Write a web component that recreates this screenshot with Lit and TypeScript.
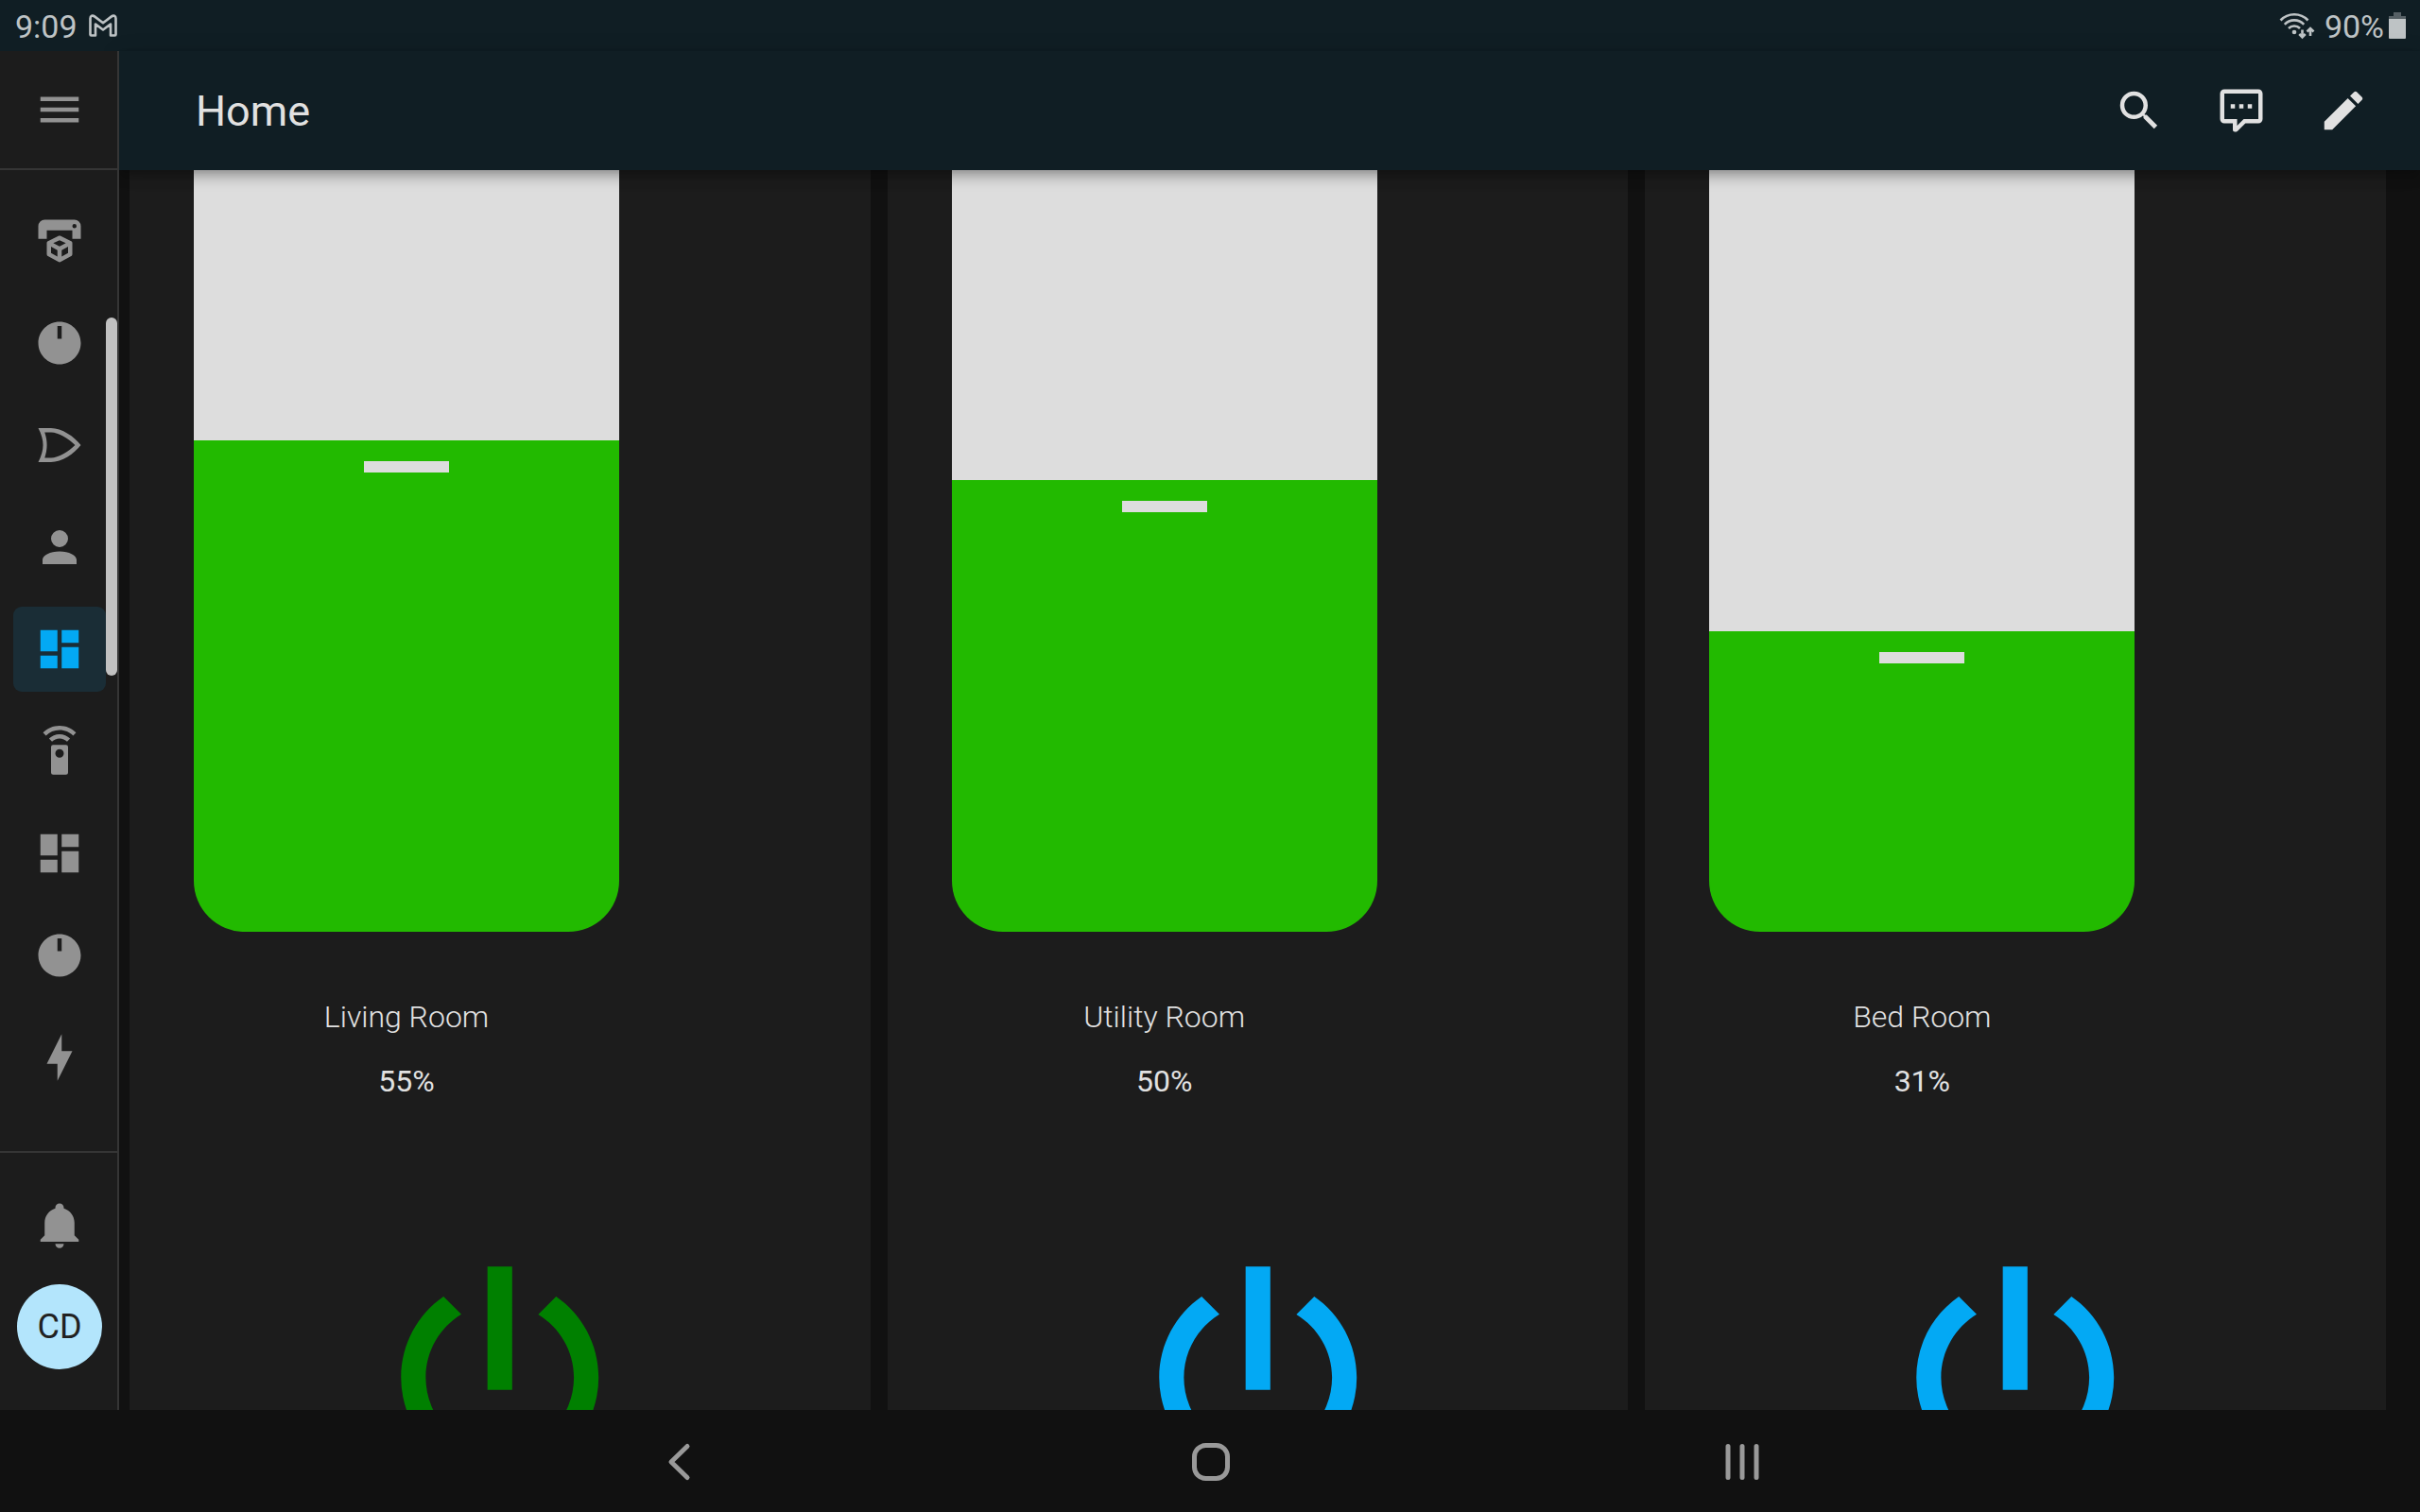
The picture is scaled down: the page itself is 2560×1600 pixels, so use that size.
import { LitElement, html, css, svg, nothing } from "lit";
import { customElement, property, state } from "lit/decorators.js";
import { classMap } from "lit/directives/class-map.js";
import { styleMap } from "lit/directives/style-map.js";

const icons: Record<string, string> = {
  menu: "M3,6H21V8H3V6M3,11H21V13H3V11M3,16H21V18H3V16Z",
  printer:
    "M19,6A1,1 0 0,0 20,5A1,1 0 0,0 19,4A1,1 0 0,0 18,5A1,1 0 0,0 19,6M19,2A3,3 0 0,1 22,5V11H18V7H6V11H2V5A3,3 0 0,1 5,2H19M18,18.25C18,18.63 17.79,18.96 17.47,19.13L12.57,21.82C12.4,21.94 12.21,22 12,22C11.79,22 11.59,21.94 11.43,21.82L6.53,19.13C6.21,18.96 6,18.63 6,18.25V13C6,12.62 6.21,12.29 6.53,12.12L11.43,9.68C11.59,9.56 11.79,9.5 12,9.5C12.21,9.5 12.4,9.56 12.57,9.68L17.47,12.12C17.79,12.29 18,12.62 18,13V18.25M12,11.65L9.04,13L12,14.6L14.96,13L12,11.65M8,17.66L11,19.29V16.33L8,14.71V17.66M16,17.66V14.71L13,16.33V19.29L16,17.66Z",
  knob: "M12 2C6.47 2 2 6.5 2 12C2 17.5 6.5 22 12 22C17.5 22 22 17.5 22 12C22 6.5 17.5 2 12 2M13 10H11V4H13V10Z",
  gate: "M2,4C5,10 5,14 2,20H8C13,20 19,16 22,12C19,8 13,4 8,4H2M5,6H8C11.5,6 16.3,9 19.3,12C16.3,15 11.5,18 8,18H5C6.4,13.9 6.4,10.1 5,6Z",
  account:
    "M12,4A4,4 0 0,1 16,8A4,4 0 0,1 12,12A4,4 0 0,1 8,8A4,4 0 0,1 12,4M12,14C16.42,14 20,15.79 20,18V20H4V18C4,15.79 7.58,14 12,14Z",
  dashboard: "M13,3V9H21V3M13,21H21V11H13M3,21H11V15H3M3,13H11V3H3V13Z",
  remote:
    "M12,0C8.96,0 6.21,1.23 4.22,3.22L5.63,4.63C7.26,3 9.5,2 12,2C14.5,2 16.74,3 18.36,4.64L19.77,3.23C17.79,1.23 15.04,0 12,0M7.05,6.05L8.46,7.46C9.37,6.56 10.62,6 12,6C13.38,6 14.63,6.56 15.54,7.46L16.95,6.05C15.68,4.78 13.93,4 12,4C10.07,4 8.32,4.78 7.05,6.05M12,15A2,2 0 0,1 10,13A2,2 0 0,1 12,11A2,2 0 0,1 14,13A2,2 0 0,1 12,15M15,9H9A1,1 0 0,0 8,10V22A1,1 0 0,0 9,23H15A1,1 0 0,0 16,22V10A1,1 0 0,0 15,9Z",
  bolt: "M11 15H6L13 1V9H18L11 23V15Z",
  bell: "M21,19V20H3V19L5,17V11C5,7.9 7.03,5.17 10,4.29C10,4.19 10,4.1 10,4A2,2 0 0,1 12,2A2,2 0 0,1 14,4C14,4.1 14,4.19 14,4.29C16.97,5.17 19,7.9 19,11V17L21,19M14,21A2,2 0 0,1 12,23A2,2 0 0,1 10,21",
  search:
    "M9.5,3A6.5,6.5 0 0,1 16,9.5C16,11.11 15.41,12.59 14.44,13.73L14.71,14H15.5L20.5,19L19,20.5L14,15.5V14.71L13.73,14.44C12.59,15.41 11.11,16 9.5,16A6.5,6.5 0 0,1 3,9.5A6.5,6.5 0 0,1 9.5,3M9.5,5C7,5 5,7 5,9.5C5,12 7,14 9.5,14C12,14 14,12 14,9.5C14,7 12,5 9.5,5Z",
  assist:
    "M20 2H4C2.9 2 2 2.9 2 4V16C2 17.1 2.9 18 4 18H8V21C8 21.6 8.4 22 9 22H9.5C9.7 22 10 21.9 10.2 21.7L13.9 18H20C21.1 18 22 17.1 22 16V4C22 2.9 21.1 2 20 2M20 16H13.1L10 19.1V16H4V4H20V16M17 11H15V9H17V11M13 11H11V9H13V11M9 11H7V9H9V11",
  pencil:
    "M20.71,7.04C21.1,6.65 21.1,6 20.71,5.63L18.37,3.29C18,2.9 17.35,2.9 16.96,3.29L15.12,5.12L18.87,8.87M3,17.25V21H6.75L17.81,9.93L14.06,6.18L3,17.25Z",
  power:
    "M16.56,5.44L15.11,6.89C16.84,7.94 18,9.83 18,12A6,6 0 0,1 12,18A6,6 0 0,1 6,12C6,9.83 7.16,7.94 8.88,6.88L7.44,5.44C5.36,6.88 4,9.28 4,12A8,8 0 0,0 12,20A8,8 0 0,0 20,12C20,9.28 18.64,6.88 16.56,5.44M13,3H11V13H13",
};

@customElement("ha-glyph")
class HaGlyph extends LitElement {
  @property() name = "";

  static styles = css`
    :host {
      display: block;
      width: 54px;
    }
    .glyph {
      display: block;
      width: 100%;
      fill: currentColor;
    }
  `;

  render() {
    return html`<svg class="glyph" viewBox="0 0 24 24" aria-hidden="true">
      ${svg`<path d=${icons[this.name] ?? ""}></path>`}
    </svg>`;
  }
}

@customElement("status-bar")
class StatusBar extends LitElement {
  static styles = css`
    :host {
      display: flex;
      align-items: center;
      justify-content: space-between;
      height: 54px;
      padding: 0 14px 0 16px;
      background: #101e24;
      color: #bec3c5;
      font-size: 34px;
      line-height: 52px;
    }
    .side {
      display: flex;
      align-items: center;
    }
    .reading {
      padding-top: 2px;
    }
    .mail {
      width: 30px;
      height: 24px;
      margin-left: 12px;
    }
    .wifi {
      width: 38px;
      height: 30px;
      margin-right: 10px;
    }
    .battery {
      width: 20px;
      height: 30px;
      margin-left: 4px;
    }
    svg {
      display: block;
      fill: none;
      stroke: currentColor;
    }
    .solid {
      fill: currentColor;
      stroke: none;
    }
    .dim {
      fill: #566065;
      stroke: none;
    }
  `;

  render() {
    return html`
      <div class="side">
        <span class="reading">9:09</span>
        <svg class="mail" viewBox="0 0 30 24" stroke-width="2.600" stroke-linejoin="round" aria-label="Mail">
          <path
            d="M1.500 21.500V4.500C1.500 1.500 4 .9 6 2.400L15 9.200L24 2.400C26 .9 28.500 1.500 28.500 4.500V21.500Q28.500 22.500 27.500 22.500H23V10.500L15 16.500L7 10.500V22.500H2.500Q1.500 22.500 1.500 21.500Z"
          ></path>
        </svg>
      </div>
      <div class="side">
        <svg class="wifi" viewBox="0 0 38 30" stroke-width="2.600" aria-label="Wi-Fi">
          <path d="M1.500 9.500A20 20 0 0 1 30.500 9.500M5.800 13.800A14 14 0 0 1 26.200 13.800M10 18A8.500 8.500 0 0 1 22 18"></path>
          <circle class="solid" cx="16" cy="22" r="2.300"></circle>
          <path d="M24.500 19.500V27M21.300 24L24.500 27.400L27.700 24M33 26V18.500M29.500 21.500L33 18L36.500 21.500"></path>
        </svg>
        <span class="reading">90%</span>
        <svg class="battery" viewBox="0 0 20 30" aria-label="Battery">
          <path class="dim" d="M6 1H14V5H19V8H1V5H6Z"></path>
          <path class="solid" d="M1 8H19V28Q19 29 18 29H2Q1 29 1 28Z"></path>
        </svg>
      </div>
    `;
  }
}

interface Panel {
  icon: string;
  label: string;
}

@customElement("side-bar")
class SideBar extends LitElement {
  @state() private selected = 4;

  private panels: Panel[] = [
    { icon: "printer", label: "Printer" },
    { icon: "knob", label: "Controls" },
    { icon: "gate", label: "Logic" },
    { icon: "account", label: "People" },
    { icon: "dashboard", label: "Home" },
    { icon: "remote", label: "Remote" },
    { icon: "dashboard", label: "Dashboard" },
    { icon: "knob", label: "Dials" },
    { icon: "bolt", label: "Energy" },
  ];

  static styles = css`
    :host {
      display: flex;
      flex-direction: column;
      box-sizing: border-box;
      width: 126px;
      border-right: 2px solid #353535;
      background: #1c1c1c;
      color: #929292;
      z-index: 2;
    }
    .top {
      display: flex;
      height: 124px;
      border-bottom: 2px solid #353535;
    }
    .menu,
    .bell {
      display: grid;
      place-items: center;
      width: 100%;
      padding: 0 0 0 2px;
      border: 0;
      background: none;
      color: inherit;
    }
    .scroll {
      display: flex;
      flex: 1;
      min-height: 0;
    }
    .list {
      display: flex;
      flex: 1;
      flex-direction: column;
      gap: 18px;
      padding: 30px 0 0 14px;
      overflow: hidden;
    }
    .item {
      display: grid;
      flex: none;
      place-items: center;
      height: 90px;
      border-radius: 9px;
      color: inherit;
    }
    .item.selected {
      background: #1a2d36;
      color: #03a9f4;
    }
    .track {
      width: 12px;
      padding-top: 156px;
    }
    .thumb {
      height: 379px;
      border-radius: 6px;
      background: #c1c1c1;
    }
    .bottom {
      display: flex;
      flex-direction: column;
      gap: 18px;
      padding: 31px 0 43px;
      border-top: 2px solid #353535;
    }
    .bell {
      height: 90px;
    }
    .avatar {
      align-self: center;
      width: 90px;
      height: 90px;
      margin-left: 2px;
      border-radius: 50%;
      background: #b3e5fc;
      color: #212121;
      font-size: 36px;
      line-height: 90px;
      text-align: center;
      text-decoration: none;
    }
  `;

  render() {
    return html`
      <div class="top">
        <button class="menu" aria-label="Menu"><ha-glyph name="menu"></ha-glyph></button>
      </div>
      <div class="scroll">
        <nav class="list">
          ${this.panels.map(
            (p, i) => html`<a
              class=${classMap({ item: true, selected: i === this.selected })}
              href="#${p.label.toLowerCase()}"
              aria-label=${p.label}
              aria-current=${i === this.selected ? "page" : nothing}
              @click=${() => (this.selected = i)}
              ><ha-glyph name=${p.icon}></ha-glyph
            ></a>`
          )}
        </nav>
        <div class="track"><div class="thumb"></div></div>
      </div>
      <div class="bottom">
        <button class="bell" aria-label="Notifications"><ha-glyph name="bell"></ha-glyph></button>
        <a class="avatar" href="#profile">CD</a>
      </div>
    `;
  }
}

@customElement("blind-card")
class BlindCard extends LitElement {
  @property() name = "";
  @property({ type: Number }) level = 0;
  @property({ type: Boolean }) on = false;

  static styles = css`
    :host {
      display: flex;
      flex-direction: column;
      align-items: flex-start;
      padding: 68px 0;
      background: #1c1c1c;
      color: #e1e1e1;
    }
    .cover {
      display: flex;
      flex-direction: column;
      align-items: center;
      width: 450px;
      margin-left: 68px;
      font-size: 32px;
      line-height: 68px;
    }
    .slider {
      --fill: calc(56px + (100% - 56px) * var(--level) / 100);
      box-sizing: border-box;
      appearance: none;
      width: 450px;
      height: 900px;
      margin: 0 0 56px;
      padding: 22px 0;
      border-radius: 54px;
      background: linear-gradient(to top, #22ba00 var(--fill), #dddddd var(--fill));
      writing-mode: vertical-lr;
      direction: rtl;
    }
    .slider::-webkit-slider-thumb {
      appearance: none;
      width: 90px;
      height: 12px;
      border-radius: 0;
      background: #dddddd;
    }
    .name {
      font-weight: 300;
    }
    .power {
      align-self: center;
      width: 40%;
      margin-top: 123px;
      padding: 0;
      border: 0;
      background: none;
      color: #03a9f4;
    }
    .power.on {
      color: #008000;
    }
    .symbol {
      width: 100%;
    }
  `;

  render() {
    return html`
      <div class="cover">
        <input
          class="slider"
          id="level"
          type="range"
          min="0"
          max="100"
          .value=${String(this.level)}
          style=${styleMap({ "--level": String(this.level) })}
          @input=${(e: Event) => (this.level = Number((e.target as HTMLInputElement).value))}
        />
        <label class="name" for="level">${this.name}</label>
        <output for="level">${this.level}%</output>
      </div>
      <button
        class=${classMap({ power: true, on: this.on })}
        aria-label="Toggle ${this.name}"
        @click=${() => (this.on = !this.on)}
      >
        <ha-glyph class="symbol" name="power"></ha-glyph>
      </button>
    `;
  }
}

@customElement("nav-bar")
class NavBar extends LitElement {
  static styles = css`
    :host {
      display: grid;
      grid-template-columns: repeat(3, 22%);
      justify-content: center;
      height: 108px;
      background: #111111;
    }
    .key {
      display: grid;
      place-items: center;
      padding: 0;
      border: 0;
      background: none;
      color: #999999;
    }
    .shape {
      width: 44px;
      height: 44px;
      fill: none;
      stroke: currentColor;
      stroke-width: 5;
      stroke-linecap: round;
      stroke-linejoin: round;
    }
  `;

  render() {
    return html`
      <button class="key" aria-label="Back">
        <svg class="shape" viewBox="0 0 44 44"><path d="M32 6.500L15 23L32 39.500"></path></svg>
      </button>
      <button class="key" aria-label="Home">
        <svg class="shape" viewBox="0 0 44 44"><rect x="5.500" y="5.500" width="35" height="35" rx="12"></rect></svg>
      </button>
      <button class="key" aria-label="Recent apps">
        <svg class="shape" viewBox="0 0 44 44"><path d="M7 6.500V39.500M22 6.500V39.500M37 6.500V39.500"></path></svg>
      </button>
    `;
  }
}

@customElement("app-root")
class AppRoot extends LitElement {
  private rooms = [
    { name: "Living Room", level: 55, on: true },
    { name: "Utility Room", level: 50, on: false },
    { name: "Bed Room", level: 31, on: false },
  ];

  static styles = css`
    :host {
      display: flex;
      flex-direction: column;
      height: 100vh;
      background: #111111;
      font-family: Roboto, "Liberation Sans", sans-serif;
    }
    .body {
      display: flex;
      flex: 1;
      min-height: 0;
    }
    .main {
      display: flex;
      flex: 1;
      flex-direction: column;
      min-width: 0;
    }
    .header {
      display: flex;
      flex: none;
      align-items: center;
      height: 126px;
      padding: 0 27px 0 81px;
      background: #101e24;
      color: #e1e1e1;
      box-shadow:
        0 4px 9px -2px rgba(0, 0, 0, 0.2),
        0 9px 11px 0 rgba(0, 0, 0, 0.14),
        0 2px 22px 0 rgba(0, 0, 0, 0.12);
      z-index: 1;
    }
    .title {
      flex: 1;
      margin: 0;
      padding-top: 2px;
      font-size: 45px;
      font-weight: 400;
      line-height: 54px;
    }
    .action {
      display: grid;
      place-items: center;
      width: 108px;
      height: 108px;
      padding: 0;
      border: 0;
      background: none;
      color: inherit;
    }
    .view {
      flex: 1;
      min-height: 0;
      overflow-y: auto;
      scrollbar-width: none;
    }
    .cards {
      display: grid;
      grid-template-columns: repeat(3, 1fr);
      gap: 18px;
      padding: 11px 36px 11px 11px;
    }
  `;

  firstUpdated() {
    const view = this.renderRoot.querySelector(".view") as HTMLElement;
    requestAnimationFrame(() => (view.scrollTop = 173));
  }

  render() {
    return html`
      <status-bar></status-bar>
      <div class="body">
        <side-bar></side-bar>
        <div class="main">
          <header class="header">
            <h1 class="title">Home</h1>
            <button class="action" aria-label="Search"><ha-glyph name="search"></ha-glyph></button>
            <button class="action" aria-label="Assist"><ha-glyph name="assist"></ha-glyph></button>
            <button class="action" aria-label="Edit"><ha-glyph name="pencil"></ha-glyph></button>
          </header>
          <main class="view">
            <div class="cards">
              ${this.rooms.map(
                (r) => html`<blind-card .name=${r.name} .level=${r.level} .on=${r.on}></blind-card>`
              )}
            </div>
          </main>
        </div>
      </div>
      <nav-bar></nav-bar>
    `;
  }
}
